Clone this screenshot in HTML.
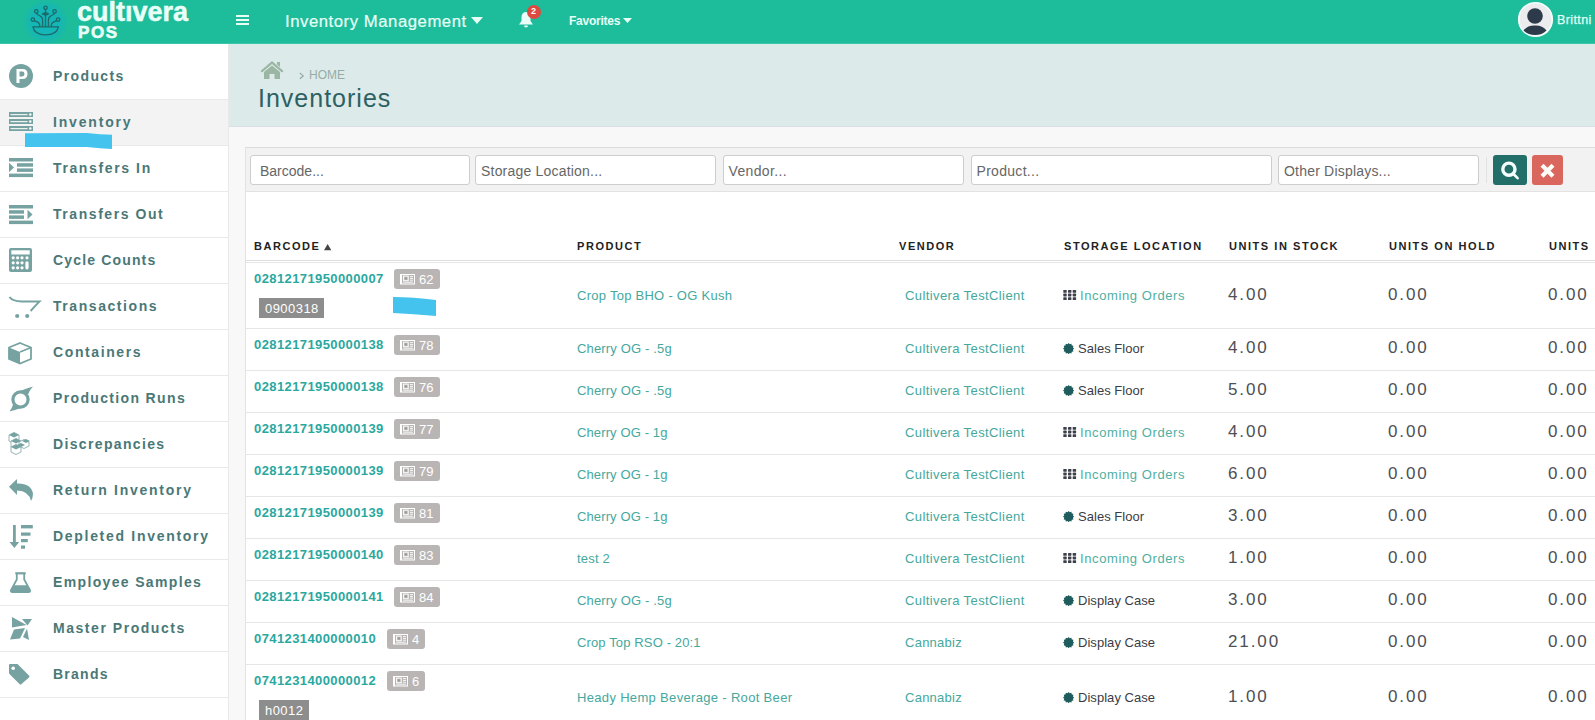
<!DOCTYPE html>
<html><head><meta charset="utf-8">
<style>
*{box-sizing:border-box;margin:0;padding:0}
html,body{width:1595px;height:720px;overflow:hidden;background:#f8f8f8;font-family:"Liberation Sans",sans-serif}
.a{position:absolute;white-space:nowrap}
#hdr{position:absolute;left:0;top:0;width:1595px;height:44px;background:#1dbc9b;border-bottom:1px solid #3cc5a8}
#side{position:absolute;left:0;top:44px;width:229px;height:676px;background:#fff;border-right:1px solid #e9e9e9}
.nav{position:absolute;left:0;width:228px;height:46px;border-bottom:1px solid #e9e9e9}
.nav .t{position:absolute;left:53px;top:14.4px;font-size:14px;line-height:17px;font-weight:bold;color:#4a7877;letter-spacing:1.45px;white-space:nowrap}
.nav svg{position:absolute;left:0;top:0}
#crumb{position:absolute;left:229px;top:44px;width:1366px;height:83px;background:#dcebe9;border-bottom:1px solid #d9e0e3}
#panel{position:absolute;left:245px;top:147px;width:1350px;height:573px;background:#fff;border-left:1px solid #e2e2e2;border-top:1px solid #dcdcdc}
#bar{position:absolute;left:0;top:0;width:1350px;height:44px;background:#f2f2f3;border-bottom:1px solid #e2e2e2}
.inp{position:absolute;top:7px;height:30px;background:#fff;border:1px solid #cdcdcd;border-radius:3px;font-size:14px;line-height:16px;color:#666;padding:7px 0 0 9px;white-space:nowrap}
.th{position:absolute;top:92px;font-size:11px;line-height:13px;font-weight:bold;color:#222;letter-spacing:1.55px;white-space:nowrap}
.row{position:absolute;left:0;width:1350px;border-bottom:1px solid #e6e6e6}
.bc{position:absolute;left:8px;font-size:13px;line-height:15px;font-weight:bold;color:#2aa8a0;letter-spacing:0.4px;white-space:nowrap}
.badge{position:absolute;height:20px;background:#bab5b5;border-radius:3px;color:#fff;font-size:13px;line-height:15px;white-space:nowrap}
.badge span{position:absolute;top:3px}
.badge svg{position:absolute;left:6px;top:4.7px}
.lab{position:absolute;left:13px;height:20px;background:#8d8d8d;color:#fff;font-size:13px;line-height:15px;padding:3px 0 0 6px;letter-spacing:0.45px;white-space:nowrap}
.pr{position:absolute;left:331px;font-size:13px;line-height:15px;color:#45a89d;white-space:nowrap}
.vd{position:absolute;left:659px;font-size:13px;line-height:15px;color:#45a89d;white-space:nowrap}
.st{position:absolute;left:834px;font-size:13px;line-height:15px;white-space:nowrap}
.st svg{position:absolute;top:1px}
.num{position:absolute;font-size:17px;line-height:20px;color:#4d5055;letter-spacing:1.9px;white-space:nowrap}
</style></head><body>
<div id="hdr">
<div class="a" style="left:23px;top:0px;width:46px;height:44px;background:radial-gradient(circle 23px at 22.5px 22px,#13b6ba 0%,#15b6b6 62%,rgba(29,188,155,0) 100%)"></div>
<svg class="a" style="left:30px;top:4px" width="32" height="34" viewBox="0 0 32 34" fill="none" stroke="#1d6a66" stroke-width="1.3">
<path d="M3 22.9 H28.3 Q27 30.8 15.6 30.8 Q4.3 30.8 3 22.9 Z"/>
<path d="M15.5 22.9 V5.4"/><circle cx="15.5" cy="3.8" r="1.7"/>
<path d="M12.6 22.9 V16 Q12.6 13 9.5 11.5 Q6.5 10.5 6.3 9"/><circle cx="6.3" cy="7.4" r="1.7"/>
<path d="M18.4 22.9 V16 Q18.4 13 21.5 11.5 Q24.5 10.5 24.6 9"/><circle cx="24.6" cy="7.4" r="1.7"/>
<path d="M9.7 22.9 V21 Q9.5 18.5 6 17.3 L4.2 16.6"/><circle cx="2.9" cy="15.6" r="1.7"/>
<path d="M21.3 22.9 V21 Q21.5 18.5 25 17.3 L26.8 16.6"/><circle cx="28.1" cy="15.6" r="1.7"/>
<path d="M12.5 10 Q15.5 8 18.5 10 Q15.5 12 12.5 10 Z" fill="#1d6a66"/>
</svg>
<div class="a" style="left:77px;top:-3px;font-size:27px;line-height:30px;font-weight:bold;color:#eafff8;letter-spacing:0px;-webkit-text-stroke:0.5px #eafff8">cultıvera</div>
<div class="a" style="left:78px;top:24px;font-size:17px;line-height:18px;font-weight:bold;color:#eafff8;letter-spacing:1.6px;-webkit-text-stroke:0.6px #eafff8">POS</div>
<div class="a" style="left:236px;top:15px;width:13px;height:2px;background:#e6fff5"></div>
<div class="a" style="left:236px;top:19px;width:13px;height:2px;background:#e6fff5"></div>
<div class="a" style="left:236px;top:23px;width:13px;height:2px;background:#e6fff5"></div>
<div class="a" style="left:285px;top:12px;font-size:16.7px;line-height:19px;color:#e8fff6;letter-spacing:0.55px;-webkit-text-stroke:0.2px #e8fff6">Inventory Management</div>
<svg class="a" style="left:471px;top:17px" width="12" height="7"><path d="M0 0H12L6 7Z" fill="#e8fff6"/></svg>
<svg class="a" style="left:518px;top:11px" width="16" height="17" viewBox="0 0 16 17"><path d="M8 1 C4.5 1 3.5 4 3.5 7 V10 L1 13.5 H15 L12.5 10 V7 C12.5 4 11.5 1 8 1 Z" fill="#eafff8"/><path d="M6 14.5 A2 2 0 0 0 10 14.5 Z" fill="#eafff8"/></svg>
<div class="a" style="left:527px;top:5px;width:14px;height:14px;border-radius:50%;background:#dd4a3f"></div>
<div class="a" style="left:531px;top:6px;font-size:9px;line-height:11px;font-weight:bold;color:#fff">2</div>
<div class="a" style="left:569px;top:14px;font-size:12px;line-height:14px;font-weight:bold;color:#e8fff6;letter-spacing:-0.25px">Favorites</div>
<svg class="a" style="left:623px;top:18px" width="9" height="5"><path d="M0 0H9L4.5 5Z" fill="#e8fff6"/></svg>
<svg class="a" style="left:1517px;top:1px" width="37" height="37" viewBox="0 0 37 37">
<circle cx="18.5" cy="18.5" r="16.8" fill="#ececee" stroke="#f4fffc" stroke-width="1.6"/>
<circle cx="18" cy="15" r="7.8" fill="#2d3a4a"/>
<path d="M6.5 29.5 Q11 24 18 24.5 Q25 24 29.5 29.5 Q25 34 18 34 Q11 34 6.5 29.5 Z" fill="#2d3a4a"/>
</svg>
<div class="a" style="left:1557px;top:14px;font-size:12.5px;line-height:13px;color:#e0fff6;letter-spacing:0.4px;-webkit-text-stroke:0.25px #e0fff6">Brittni</div>
</div>
<div id="side">
<div class="nav" style="top:10px;"><svg style="top:-1px" width="40" height="46"><circle cx="21" cy="23" r="12" fill="#76a3a1"/><path d="M16.5 30 V16 H22.5 Q27.5 16 27.5 21 Q27.5 26 22.5 26 H19.5 V30 Z M19.5 18.6 V23.4 H22.3 Q24.5 23.4 24.5 21 Q24.5 18.6 22.3 18.6 Z" fill="#fff" fill-rule="evenodd"/></svg><div class="t" style="letter-spacing:1.38px">Products</div></div>
<div class="nav" style="top:56px;background:#f3f3f3;"><svg style="top:-1px" width="40" height="46"><g fill="#76a3a1"><rect x="9" y="13" width="24" height="5"/><rect x="9" y="20" width="24" height="5"/><rect x="9" y="27" width="24" height="5"/></g><g fill="#fff"><rect x="10.5" y="15" width="17" height="1.2" opacity="0.85"/><rect x="10.5" y="22" width="17" height="1.2" opacity="0.85"/><rect x="10.5" y="29" width="17" height="1.2" opacity="0.85"/><circle cx="30.3" cy="15.5" r="1.2"/><circle cx="30.3" cy="22.5" r="1.2"/><circle cx="30.3" cy="29.5" r="1.2"/></g></svg><div class="t" style="letter-spacing:1.82px">Inventory</div></div>
<div class="nav" style="top:102px;"><svg style="top:-0.7px" width="40" height="46"><g fill="#76a3a1"><rect x="9" y="13" width="24" height="3.5"/><rect x="17" y="18.2" width="16" height="3.5"/><rect x="17" y="23.4" width="16" height="3.5"/><rect x="9" y="28.6" width="24" height="3.5"/><path d="M9 17.8L14 22.5L9 27.2Z"/></g></svg><div class="t" style="letter-spacing:1.62px">Transfers In</div></div>
<div class="nav" style="top:148px;"><svg style="top:-0.5px" width="40" height="46"><g fill="#76a3a1"><rect x="9" y="13" width="24" height="3.5"/><rect x="9" y="18.2" width="15" height="3.5"/><rect x="9" y="23.4" width="15" height="3.5"/><rect x="9" y="28.6" width="24" height="3.5"/><path d="M27.5 17.8L32.5 22.5L27.5 27.2Z"/></g></svg><div class="t" style="letter-spacing:1.56px">Transfers Out</div></div>
<div class="nav" style="top:194px;"><svg style="top:-2px" width="40" height="46"><rect x="9" y="12" width="23" height="24" rx="2" fill="#76a3a1"/><rect x="11.3" y="14.3" width="18.4" height="4.2" fill="#fff"/><g fill="#fff"><circle cx="13.2" cy="21.8" r="1.6"/><circle cx="17.6" cy="21.8" r="1.6"/><circle cx="22" cy="21.8" r="1.6"/><circle cx="27" cy="21.8" r="1.6"/><circle cx="13.2" cy="26.8" r="1.6"/><circle cx="17.6" cy="26.8" r="1.6"/><circle cx="22" cy="26.8" r="1.6"/><circle cx="13.2" cy="31.8" r="1.6"/><circle cx="17.6" cy="31.8" r="1.6"/><circle cx="22" cy="31.8" r="1.6"/><rect x="25.4" y="25.2" width="3.2" height="8.2" rx="1.6"/></g></svg><div class="t" style="letter-spacing:1.16px">Cycle Counts</div></div>
<div class="nav" style="top:240px;"><svg style="top:0px" width="42" height="46"><path d="M9.5 13 Q12.5 17.3 22 17.4 L39.6 17.4 Q36 21 30.6 27" fill="none" stroke="#76a3a1" stroke-width="2"/><circle cx="17.2" cy="32" r="2.1" fill="#76a3a1"/><circle cx="27.2" cy="32" r="2.1" fill="#76a3a1"/></svg><div class="t" style="letter-spacing:1.56px">Transactions</div></div>
<div class="nav" style="top:286px;"><svg style="top:-1.2px" width="40" height="46"><path d="M20 14 L31 18.5 V30 L20 34.5 L9 30 V18.5 Z" fill="none" stroke="#76a3a1" stroke-width="1.8"/><path d="M9 18.5 L20 23 V34.5 L9 30 Z" fill="#76a3a1"/><path d="M20 23 L31 18.5" stroke="#76a3a1" stroke-width="1.8"/></svg><div class="t" style="letter-spacing:1.61px">Containers</div></div>
<div class="nav" style="top:332px;"><svg style="top:0px" width="40" height="46"><circle cx="20.5" cy="23.5" r="7.6" fill="none" stroke="#76a3a1" stroke-width="3.2"/><path d="M20 15 Q27 12 33 10.5 Q29.5 14 28 18.5 Z" fill="#76a3a1"/><path d="M21 32 Q14 34.5 9.5 35.5 Q12 32.5 13 28.5 Z" fill="#76a3a1"/></svg><div class="t" style="letter-spacing:1.35px">Production Runs</div></div>
<div class="nav" style="top:378px;"><svg style="top:-2.8px" width="40" height="46"><g stroke="#76a3a1" stroke-width="0.8" fill="#fff"><path d="M9 16 L14 13.5 L19 16 V22 L14 24.5 L9 22Z"/><path d="M11 22 L16 19.5 L21 22 V28 L16 30.5 L11 28Z"/><path d="M11 28 L16 25.5 L21 28 V33 L16 35.5 L11 33Z"/><path d="M19 23 L24 20.5 L29 23 V27 L24 29.5 L19 27Z"/></g><g fill="#76a3a1"><path d="M9 16 L14 13.5 L19 16 L14 18.5Z"/><path d="M11 22 L16 19.5 L21 22 L16 24.5Z"/><path d="M11 28 L16 25.5 L21 28 L16 30.5Z"/><path d="M17 26 L21 24 L25 26 L21 28Z"/><path d="M22 22 L26 20 L30 22 L26 24Z"/></g></svg><div class="t" style="letter-spacing:1.35px">Discrepancies</div></div>
<div class="nav" style="top:424px;"><svg style="top:0px" width="40" height="46"><path d="M9 18.7 L17 11 V15.5 Q31 15 33 25.5 Q33 30 31 33 Q29 23 17 22.5 V27 Z" fill="#76a3a1"/></svg><div class="t" style="letter-spacing:1.73px">Return Inventory</div></div>
<div class="nav" style="top:470px;"><svg style="top:-1.5px" width="40" height="46"><g fill="#76a3a1"><rect x="13" y="12" width="2.8" height="20"/><path d="M9.5 29 H19.2 L14.4 35Z"/><rect x="21" y="12" width="11.8" height="3.4"/><rect x="21" y="19.5" width="9.5" height="3.2"/><rect x="21" y="26" width="6.8" height="3.2"/><rect x="21" y="32.5" width="4" height="3.2"/></g></svg><div class="t" style="letter-spacing:1.70px">Depleted Inventory</div></div>
<div class="nav" style="top:516px;"><svg style="top:0px" width="40" height="46"><path d="M16.8 14 V19.5 L11 30 Q10.3 32 12.5 32 H28.5 Q30.7 32 30 30 L24.2 19.5 V14" fill="none" stroke="#76a3a1" stroke-width="1.8"/><rect x="15.3" y="12.2" width="10.4" height="2.2" fill="#76a3a1"/><path d="M13.6 25.3 H27.4 L30 30 Q30.7 32 28.5 32 H12.5 Q10.3 32 11 30 Z" fill="#76a3a1"/></svg><div class="t" style="letter-spacing:1.35px">Employee Samples</div></div>
<div class="nav" style="top:562px;"><svg style="top:-1.2px" width="40" height="46"><g fill="#76a3a1"><path d="M12 12 L26.5 20 L12 22.5Z"/><path d="M22 14 H32 L27.5 20.5Z"/><path d="M10 34.5 L14 24.5 L25 23 L20 33.5Z"/><path d="M27 23.5 L29 35 L23 32Z"/></g></svg><div class="t" style="letter-spacing:1.54px">Master Products</div></div>
<div class="nav" style="top:608px;"><svg style="top:0px" width="40" height="46"><path d="M10 12 H17.5 L29 23.5 Q30 24.5 29 25.5 L21.5 32 Q20.5 33 19.5 32 L9.5 22 Q9 21.5 9 20.5 V13 Q9 12 10 12 Z" fill="#76a3a1"/><circle cx="13.2" cy="16.2" r="1.8" fill="#fff"/></svg><div class="t" style="letter-spacing:1.25px">Brands</div></div>
<svg class="a" style="left:25px;top:89px" width="88" height="18"><path d="M0 0.3 L62 0 Q75 1.5 87 1.8 V16 Q75 15.5 62 14 L0 14 Z" fill="#45c3ef"/></svg>
</div>
<div id="crumb">
<svg class="a" style="left:31px;top:16px" width="24" height="20" viewBox="0 0 24 20"><path d="M12 1 L23.5 11 L22 12.5 L12 4 L2 12.5 L0.5 11 Z" fill="#9bb6a3"/><path d="M17 2 H20 V7 L17 4.5Z" fill="#9bb6a3"/><path d="M4 12 L12 5.5 L20 12 V19 H14.5 V14 H9.5 V19 H4 Z" fill="#9bb6a3"/></svg>
<svg class="a" style="left:70px;top:28px" width="6" height="8"><path d="M0.8 1 L4.2 3.9 L0.8 6.8" fill="none" stroke="#94aaa4" stroke-width="1.2"/></svg>
<div class="a" style="left:80px;top:24px;font-size:12px;line-height:14px;color:#97aba5">HOME</div>
<div class="a" style="left:29px;top:40px;font-size:25px;line-height:28px;color:#2c6062;letter-spacing:1.0px">Inventories</div>
</div>
<div id="panel">
<div id="bar">
<div class="inp" style="left:4px;width:220px;padding-left:9px;letter-spacing:0px">Barcode...</div>
<div class="inp" style="left:229px;width:241px;padding-left:5px;letter-spacing:0.2px">Storage Location...</div>
<div class="inp" style="left:477px;width:241px;padding-left:4.5px;letter-spacing:0.35px">Vendor...</div>
<div class="inp" style="left:725px;width:301px;padding-left:4.5px;letter-spacing:0.3px">Product...</div>
<div class="inp" style="left:1032px;width:201px;padding-left:5px;letter-spacing:0.2px">Other Displays...</div>
<div class="a" style="left:1240px;top:9px;width:1px;height:26px;background:#e2e2e4"></div>
<div class="a" style="left:1247px;top:7px;width:34px;height:30px;border-radius:3px;background:#226e69"></div>
<svg class="a" style="left:1247px;top:7px" width="34" height="30" viewBox="0 0 34 30"><circle cx="15.9" cy="14.2" r="6.1" fill="none" stroke="#f4fffd" stroke-width="3.4"/><path d="M20.5 19 L24.6 23.2" stroke="#f4fffd" stroke-width="2.6" stroke-linecap="round"/></svg>
<div class="a" style="left:1286px;top:7px;width:31px;height:30px;border-radius:3px;background:#d9675e"></div>
<svg class="a" style="left:1286px;top:7px" width="31" height="30" viewBox="0 0 31 30"><path d="M11.5 11.8 L19.5 19.8 M19.5 11.8 L11.5 19.8" stroke="#fffdf8" stroke-width="4.2" stroke-linecap="square"/></svg>
</div>
<div class="th" style="left:8px">BARCODE</div>
<div class="th" style="left:331px">PRODUCT</div>
<div class="th" style="left:653px">VENDOR</div>
<div class="th" style="left:818px">STORAGE LOCATION</div>
<div class="th" style="left:983px">UNITS IN STOCK</div>
<div class="th" style="left:1143px">UNITS ON HOLD</div>
<div class="th" style="left:1303px">UNITS</div>
<svg class="a" style="left:77.5px;top:96px" width="8" height="7"><path d="M0 6.2H7.3L3.65 0Z" fill="#444"/></svg>
<div class="a" style="left:0;top:112px;width:1350px;height:1px;background:#dedede"></div>
<div class="a" style="left:0;top:114px;width:1350px;height:1px;background:#e6e6e6"></div>
<div class="row" style="top:115px;height:66px">
<div class="bc" style="top:8px">02812171950000007</div>
<div class="badge" style="left:148px;top:6px;width:46px"><svg width="15" height="11" viewBox="0 0 15 11"><rect x="0" y="0" width="15" height="10.5" fill="#fff"/><rect x="2" y="1" width="12" height="8.5" fill="#bab5b5"/><rect x="3.6" y="2.1" width="4.6" height="4.6" fill="none" stroke="#fff" stroke-width="1"/><rect x="5" y="3.5" width="1.8" height="1.8" fill="#9a9595"/><path d="M10 2.6H13M10 4.4H13M10 6.2H13M3.2 8.2H13" stroke="#fff" stroke-width="0.9"/></svg><span style="left:25px">62</span></div>
<div class="lab" style="top:35px;width:65px">0900318</div>
<div class="pr" style="top:25px;letter-spacing:0.267px;">Crop Top BHO - OG Kush</div>
<div class="vd" style="top:25px;letter-spacing:0.395px;">Cultivera TestClient</div>
<div class="st" style="top:25px;left:817px;color:#4fafa3"><svg style="position:absolute;left:0;top:2px" width="14" height="10" viewBox="0 0 14 10"><g fill="#3d404a"><rect x="0.3" y="0" width="3.4" height="2.8" rx="0.6"/><rect x="5" y="0" width="3.4" height="2.8" rx="0.6"/><rect x="9.7" y="0" width="3.4" height="2.8" rx="0.6"/><rect x="0.3" y="3.6" width="3.4" height="2.8" rx="0.6"/><rect x="5" y="3.6" width="3.4" height="2.8" rx="0.6"/><rect x="9.7" y="3.6" width="3.4" height="2.8" rx="0.6"/><rect x="0.3" y="7.2" width="3.4" height="2.8" rx="0.6"/><rect x="5" y="7.2" width="3.4" height="2.8" rx="0.6"/><rect x="9.7" y="7.2" width="3.4" height="2.8" rx="0.6"/></g></svg><span style="position:absolute;left:17px;letter-spacing:0.600px;">Incoming Orders</span></div>
<div class="num" style="left:982px;top:22px">4.00</div>
<div class="num" style="left:1142px;top:22px">0.00</div>
<div class="num" style="left:1302px;top:22px">0.00</div>
</div>
<div class="row" style="top:181px;height:42px">
<div class="bc" style="top:8px">02812171950000138</div>
<div class="badge" style="left:148px;top:6px;width:46px"><svg width="15" height="11" viewBox="0 0 15 11"><rect x="0" y="0" width="15" height="10.5" fill="#fff"/><rect x="2" y="1" width="12" height="8.5" fill="#bab5b5"/><rect x="3.6" y="2.1" width="4.6" height="4.6" fill="none" stroke="#fff" stroke-width="1"/><rect x="5" y="3.5" width="1.8" height="1.8" fill="#9a9595"/><path d="M10 2.6H13M10 4.4H13M10 6.2H13M3.2 8.2H13" stroke="#fff" stroke-width="0.9"/></svg><span style="left:25px">78</span></div>
<div class="pr" style="top:12px;letter-spacing:0.157px;">Cherry OG - .5g</div>
<div class="vd" style="top:12px;letter-spacing:0.395px;">Cultivera TestClient</div>
<div class="st" style="top:12px;left:817px;color:#3b3c44"><svg style="position:absolute;left:0;top:2px" width="11.2" height="11.2" viewBox="0 0 11.2 11.2"><polygon points="11.20,5.60 9.95,6.76 10.45,8.40 8.78,8.78 8.40,10.45 6.76,9.95 5.60,11.20 4.44,9.95 2.80,10.45 2.42,8.78 0.75,8.40 1.25,6.76 0.00,5.60 1.25,4.44 0.75,2.80 2.42,2.42 2.80,0.75 4.44,1.25 5.60,0.00 6.76,1.25 8.40,0.75 8.78,2.42 10.45,2.80 9.95,4.44" fill="#1f5c5d"/></svg><span style="position:absolute;left:15px;letter-spacing:0.030px;">Sales Floor</span></div>
<div class="num" style="left:982px;top:9px">4.00</div>
<div class="num" style="left:1142px;top:9px">0.00</div>
<div class="num" style="left:1302px;top:9px">0.00</div>
</div>
<div class="row" style="top:223px;height:42px">
<div class="bc" style="top:8px">02812171950000138</div>
<div class="badge" style="left:148px;top:6px;width:46px"><svg width="15" height="11" viewBox="0 0 15 11"><rect x="0" y="0" width="15" height="10.5" fill="#fff"/><rect x="2" y="1" width="12" height="8.5" fill="#bab5b5"/><rect x="3.6" y="2.1" width="4.6" height="4.6" fill="none" stroke="#fff" stroke-width="1"/><rect x="5" y="3.5" width="1.8" height="1.8" fill="#9a9595"/><path d="M10 2.6H13M10 4.4H13M10 6.2H13M3.2 8.2H13" stroke="#fff" stroke-width="0.9"/></svg><span style="left:25px">76</span></div>
<div class="pr" style="top:12px;letter-spacing:0.157px;">Cherry OG - .5g</div>
<div class="vd" style="top:12px;letter-spacing:0.395px;">Cultivera TestClient</div>
<div class="st" style="top:12px;left:817px;color:#3b3c44"><svg style="position:absolute;left:0;top:2px" width="11.2" height="11.2" viewBox="0 0 11.2 11.2"><polygon points="11.20,5.60 9.95,6.76 10.45,8.40 8.78,8.78 8.40,10.45 6.76,9.95 5.60,11.20 4.44,9.95 2.80,10.45 2.42,8.78 0.75,8.40 1.25,6.76 0.00,5.60 1.25,4.44 0.75,2.80 2.42,2.42 2.80,0.75 4.44,1.25 5.60,0.00 6.76,1.25 8.40,0.75 8.78,2.42 10.45,2.80 9.95,4.44" fill="#1f5c5d"/></svg><span style="position:absolute;left:15px;letter-spacing:0.030px;">Sales Floor</span></div>
<div class="num" style="left:982px;top:9px">5.00</div>
<div class="num" style="left:1142px;top:9px">0.00</div>
<div class="num" style="left:1302px;top:9px">0.00</div>
</div>
<div class="row" style="top:265px;height:42px">
<div class="bc" style="top:8px">02812171950000139</div>
<div class="badge" style="left:148px;top:6px;width:46px"><svg width="15" height="11" viewBox="0 0 15 11"><rect x="0" y="0" width="15" height="10.5" fill="#fff"/><rect x="2" y="1" width="12" height="8.5" fill="#bab5b5"/><rect x="3.6" y="2.1" width="4.6" height="4.6" fill="none" stroke="#fff" stroke-width="1"/><rect x="5" y="3.5" width="1.8" height="1.8" fill="#9a9595"/><path d="M10 2.6H13M10 4.4H13M10 6.2H13M3.2 8.2H13" stroke="#fff" stroke-width="0.9"/></svg><span style="left:25px">77</span></div>
<div class="pr" style="top:12px;letter-spacing:0.123px;">Cherry OG - 1g</div>
<div class="vd" style="top:12px;letter-spacing:0.395px;">Cultivera TestClient</div>
<div class="st" style="top:12px;left:817px;color:#4fafa3"><svg style="position:absolute;left:0;top:2px" width="14" height="10" viewBox="0 0 14 10"><g fill="#3d404a"><rect x="0.3" y="0" width="3.4" height="2.8" rx="0.6"/><rect x="5" y="0" width="3.4" height="2.8" rx="0.6"/><rect x="9.7" y="0" width="3.4" height="2.8" rx="0.6"/><rect x="0.3" y="3.6" width="3.4" height="2.8" rx="0.6"/><rect x="5" y="3.6" width="3.4" height="2.8" rx="0.6"/><rect x="9.7" y="3.6" width="3.4" height="2.8" rx="0.6"/><rect x="0.3" y="7.2" width="3.4" height="2.8" rx="0.6"/><rect x="5" y="7.2" width="3.4" height="2.8" rx="0.6"/><rect x="9.7" y="7.2" width="3.4" height="2.8" rx="0.6"/></g></svg><span style="position:absolute;left:17px;letter-spacing:0.600px;">Incoming Orders</span></div>
<div class="num" style="left:982px;top:9px">4.00</div>
<div class="num" style="left:1142px;top:9px">0.00</div>
<div class="num" style="left:1302px;top:9px">0.00</div>
</div>
<div class="row" style="top:307px;height:42px">
<div class="bc" style="top:8px">02812171950000139</div>
<div class="badge" style="left:148px;top:6px;width:46px"><svg width="15" height="11" viewBox="0 0 15 11"><rect x="0" y="0" width="15" height="10.5" fill="#fff"/><rect x="2" y="1" width="12" height="8.5" fill="#bab5b5"/><rect x="3.6" y="2.1" width="4.6" height="4.6" fill="none" stroke="#fff" stroke-width="1"/><rect x="5" y="3.5" width="1.8" height="1.8" fill="#9a9595"/><path d="M10 2.6H13M10 4.4H13M10 6.2H13M3.2 8.2H13" stroke="#fff" stroke-width="0.9"/></svg><span style="left:25px">79</span></div>
<div class="pr" style="top:12px;letter-spacing:0.123px;">Cherry OG - 1g</div>
<div class="vd" style="top:12px;letter-spacing:0.395px;">Cultivera TestClient</div>
<div class="st" style="top:12px;left:817px;color:#4fafa3"><svg style="position:absolute;left:0;top:2px" width="14" height="10" viewBox="0 0 14 10"><g fill="#3d404a"><rect x="0.3" y="0" width="3.4" height="2.8" rx="0.6"/><rect x="5" y="0" width="3.4" height="2.8" rx="0.6"/><rect x="9.7" y="0" width="3.4" height="2.8" rx="0.6"/><rect x="0.3" y="3.6" width="3.4" height="2.8" rx="0.6"/><rect x="5" y="3.6" width="3.4" height="2.8" rx="0.6"/><rect x="9.7" y="3.6" width="3.4" height="2.8" rx="0.6"/><rect x="0.3" y="7.2" width="3.4" height="2.8" rx="0.6"/><rect x="5" y="7.2" width="3.4" height="2.8" rx="0.6"/><rect x="9.7" y="7.2" width="3.4" height="2.8" rx="0.6"/></g></svg><span style="position:absolute;left:17px;letter-spacing:0.600px;">Incoming Orders</span></div>
<div class="num" style="left:982px;top:9px">6.00</div>
<div class="num" style="left:1142px;top:9px">0.00</div>
<div class="num" style="left:1302px;top:9px">0.00</div>
</div>
<div class="row" style="top:349px;height:42px">
<div class="bc" style="top:8px">02812171950000139</div>
<div class="badge" style="left:148px;top:6px;width:46px"><svg width="15" height="11" viewBox="0 0 15 11"><rect x="0" y="0" width="15" height="10.5" fill="#fff"/><rect x="2" y="1" width="12" height="8.5" fill="#bab5b5"/><rect x="3.6" y="2.1" width="4.6" height="4.6" fill="none" stroke="#fff" stroke-width="1"/><rect x="5" y="3.5" width="1.8" height="1.8" fill="#9a9595"/><path d="M10 2.6H13M10 4.4H13M10 6.2H13M3.2 8.2H13" stroke="#fff" stroke-width="0.9"/></svg><span style="left:25px">81</span></div>
<div class="pr" style="top:12px;letter-spacing:0.123px;">Cherry OG - 1g</div>
<div class="vd" style="top:12px;letter-spacing:0.395px;">Cultivera TestClient</div>
<div class="st" style="top:12px;left:817px;color:#3b3c44"><svg style="position:absolute;left:0;top:2px" width="11.2" height="11.2" viewBox="0 0 11.2 11.2"><polygon points="11.20,5.60 9.95,6.76 10.45,8.40 8.78,8.78 8.40,10.45 6.76,9.95 5.60,11.20 4.44,9.95 2.80,10.45 2.42,8.78 0.75,8.40 1.25,6.76 0.00,5.60 1.25,4.44 0.75,2.80 2.42,2.42 2.80,0.75 4.44,1.25 5.60,0.00 6.76,1.25 8.40,0.75 8.78,2.42 10.45,2.80 9.95,4.44" fill="#1f5c5d"/></svg><span style="position:absolute;left:15px;letter-spacing:0.030px;">Sales Floor</span></div>
<div class="num" style="left:982px;top:9px">3.00</div>
<div class="num" style="left:1142px;top:9px">0.00</div>
<div class="num" style="left:1302px;top:9px">0.00</div>
</div>
<div class="row" style="top:391px;height:42px">
<div class="bc" style="top:8px">02812171950000140</div>
<div class="badge" style="left:148px;top:6px;width:46px"><svg width="15" height="11" viewBox="0 0 15 11"><rect x="0" y="0" width="15" height="10.5" fill="#fff"/><rect x="2" y="1" width="12" height="8.5" fill="#bab5b5"/><rect x="3.6" y="2.1" width="4.6" height="4.6" fill="none" stroke="#fff" stroke-width="1"/><rect x="5" y="3.5" width="1.8" height="1.8" fill="#9a9595"/><path d="M10 2.6H13M10 4.4H13M10 6.2H13M3.2 8.2H13" stroke="#fff" stroke-width="0.9"/></svg><span style="left:25px">83</span></div>
<div class="pr" style="top:12px;letter-spacing:0.200px;">test 2</div>
<div class="vd" style="top:12px;letter-spacing:0.395px;">Cultivera TestClient</div>
<div class="st" style="top:12px;left:817px;color:#4fafa3"><svg style="position:absolute;left:0;top:2px" width="14" height="10" viewBox="0 0 14 10"><g fill="#3d404a"><rect x="0.3" y="0" width="3.4" height="2.8" rx="0.6"/><rect x="5" y="0" width="3.4" height="2.8" rx="0.6"/><rect x="9.7" y="0" width="3.4" height="2.8" rx="0.6"/><rect x="0.3" y="3.6" width="3.4" height="2.8" rx="0.6"/><rect x="5" y="3.6" width="3.4" height="2.8" rx="0.6"/><rect x="9.7" y="3.6" width="3.4" height="2.8" rx="0.6"/><rect x="0.3" y="7.2" width="3.4" height="2.8" rx="0.6"/><rect x="5" y="7.2" width="3.4" height="2.8" rx="0.6"/><rect x="9.7" y="7.2" width="3.4" height="2.8" rx="0.6"/></g></svg><span style="position:absolute;left:17px;letter-spacing:0.600px;">Incoming Orders</span></div>
<div class="num" style="left:982px;top:9px">1.00</div>
<div class="num" style="left:1142px;top:9px">0.00</div>
<div class="num" style="left:1302px;top:9px">0.00</div>
</div>
<div class="row" style="top:433px;height:42px">
<div class="bc" style="top:8px">02812171950000141</div>
<div class="badge" style="left:148px;top:6px;width:46px"><svg width="15" height="11" viewBox="0 0 15 11"><rect x="0" y="0" width="15" height="10.5" fill="#fff"/><rect x="2" y="1" width="12" height="8.5" fill="#bab5b5"/><rect x="3.6" y="2.1" width="4.6" height="4.6" fill="none" stroke="#fff" stroke-width="1"/><rect x="5" y="3.5" width="1.8" height="1.8" fill="#9a9595"/><path d="M10 2.6H13M10 4.4H13M10 6.2H13M3.2 8.2H13" stroke="#fff" stroke-width="0.9"/></svg><span style="left:25px">84</span></div>
<div class="pr" style="top:12px;letter-spacing:0.157px;">Cherry OG - .5g</div>
<div class="vd" style="top:12px;letter-spacing:0.395px;">Cultivera TestClient</div>
<div class="st" style="top:12px;left:817px;color:#3b3c44"><svg style="position:absolute;left:0;top:2px" width="11.2" height="11.2" viewBox="0 0 11.2 11.2"><polygon points="11.20,5.60 9.95,6.76 10.45,8.40 8.78,8.78 8.40,10.45 6.76,9.95 5.60,11.20 4.44,9.95 2.80,10.45 2.42,8.78 0.75,8.40 1.25,6.76 0.00,5.60 1.25,4.44 0.75,2.80 2.42,2.42 2.80,0.75 4.44,1.25 5.60,0.00 6.76,1.25 8.40,0.75 8.78,2.42 10.45,2.80 9.95,4.44" fill="#1f5c5d"/></svg><span style="position:absolute;left:15px;letter-spacing:0.045px;">Display Case</span></div>
<div class="num" style="left:982px;top:9px">3.00</div>
<div class="num" style="left:1142px;top:9px">0.00</div>
<div class="num" style="left:1302px;top:9px">0.00</div>
</div>
<div class="row" style="top:475px;height:42px">
<div class="bc" style="top:8px">0741231400000010</div>
<div class="badge" style="left:141px;top:6px;width:38px"><svg width="15" height="11" viewBox="0 0 15 11"><rect x="0" y="0" width="15" height="10.5" fill="#fff"/><rect x="2" y="1" width="12" height="8.5" fill="#bab5b5"/><rect x="3.6" y="2.1" width="4.6" height="4.6" fill="none" stroke="#fff" stroke-width="1"/><rect x="5" y="3.5" width="1.8" height="1.8" fill="#9a9595"/><path d="M10 2.6H13M10 4.4H13M10 6.2H13M3.2 8.2H13" stroke="#fff" stroke-width="0.9"/></svg><span style="left:25px">4</span></div>
<div class="pr" style="top:12px;letter-spacing:0.133px;">Crop Top RSO - 20:1</div>
<div class="vd" style="top:12px;letter-spacing:0.257px;">Cannabiz</div>
<div class="st" style="top:12px;left:817px;color:#3b3c44"><svg style="position:absolute;left:0;top:2px" width="11.2" height="11.2" viewBox="0 0 11.2 11.2"><polygon points="11.20,5.60 9.95,6.76 10.45,8.40 8.78,8.78 8.40,10.45 6.76,9.95 5.60,11.20 4.44,9.95 2.80,10.45 2.42,8.78 0.75,8.40 1.25,6.76 0.00,5.60 1.25,4.44 0.75,2.80 2.42,2.42 2.80,0.75 4.44,1.25 5.60,0.00 6.76,1.25 8.40,0.75 8.78,2.42 10.45,2.80 9.95,4.44" fill="#1f5c5d"/></svg><span style="position:absolute;left:15px;letter-spacing:0.045px;">Display Case</span></div>
<div class="num" style="left:982px;top:9px">21.00</div>
<div class="num" style="left:1142px;top:9px">0.00</div>
<div class="num" style="left:1302px;top:9px">0.00</div>
</div>
<div class="row" style="top:517px;height:70px">
<div class="bc" style="top:8px">0741231400000012</div>
<div class="badge" style="left:141px;top:6px;width:38px"><svg width="15" height="11" viewBox="0 0 15 11"><rect x="0" y="0" width="15" height="10.5" fill="#fff"/><rect x="2" y="1" width="12" height="8.5" fill="#bab5b5"/><rect x="3.6" y="2.1" width="4.6" height="4.6" fill="none" stroke="#fff" stroke-width="1"/><rect x="5" y="3.5" width="1.8" height="1.8" fill="#9a9595"/><path d="M10 2.6H13M10 4.4H13M10 6.2H13M3.2 8.2H13" stroke="#fff" stroke-width="0.9"/></svg><span style="left:25px">6</span></div>
<div class="lab" style="top:35px;width:50px">h0012</div>
<div class="pr" style="top:25px;letter-spacing:0.327px;">Heady Hemp Beverage - Root Beer</div>
<div class="vd" style="top:25px;letter-spacing:0.257px;">Cannabiz</div>
<div class="st" style="top:25px;left:817px;color:#3b3c44"><svg style="position:absolute;left:0;top:2px" width="11.2" height="11.2" viewBox="0 0 11.2 11.2"><polygon points="11.20,5.60 9.95,6.76 10.45,8.40 8.78,8.78 8.40,10.45 6.76,9.95 5.60,11.20 4.44,9.95 2.80,10.45 2.42,8.78 0.75,8.40 1.25,6.76 0.00,5.60 1.25,4.44 0.75,2.80 2.42,2.42 2.80,0.75 4.44,1.25 5.60,0.00 6.76,1.25 8.40,0.75 8.78,2.42 10.45,2.80 9.95,4.44" fill="#1f5c5d"/></svg><span style="position:absolute;left:15px;letter-spacing:0.045px;">Display Case</span></div>
<div class="num" style="left:982px;top:22px">1.00</div>
<div class="num" style="left:1142px;top:22px">0.00</div>
<div class="num" style="left:1302px;top:22px">0.00</div>
</div>
<svg class="a" style="left:147px;top:149px" width="44" height="20"><path d="M0 0 Q20 0 43 3 V19 Q20 17 0 16 Z" fill="#45c3ef"/></svg>
</div>
</body></html>
